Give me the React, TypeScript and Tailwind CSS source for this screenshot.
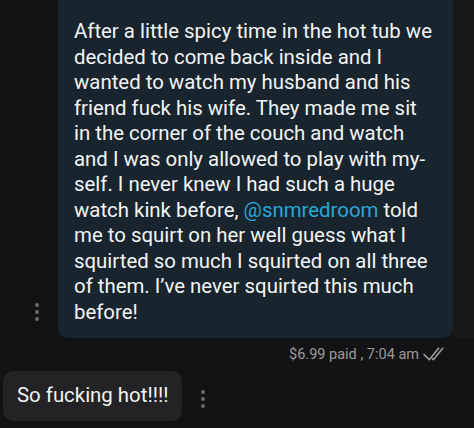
import React from 'react';

const Dots: React.FC<{ className?: string }> = ({ className }) => (
  <div className={`flex flex-col gap-[3px] ${className ?? ''}`}>
    <span className="w-[4px] h-[4px] rounded-full bg-[#6b6b6e]" />
    <span className="w-[4px] h-[4px] rounded-full bg-[#6b6b6e]" />
    <span className="w-[4px] h-[4px] rounded-full bg-[#6b6b6e]" />
  </div>
);

const DoubleCheck: React.FC = () => (
  <svg width="27" height="17" viewBox="0 0 26 16" fill="none" stroke="#9a9a9c" strokeWidth="1.6" strokeLinecap="round" strokeLinejoin="round">
    <path d="M1 8 L6 13 L15 2" />
    <path d="M9 12 L10 13 L19 2" />
  </svg>
);

// message wraps exactly as in the app
const lines: React.ReactNode[] = [
  'After a little spicy time in the hot tub we',
  'decided to come back inside and I',
  'wanted to watch my husband and his',
  'friend fuck his wife. They made me sit',
  'in the corner of the couch and watch',
  'and I was only allowed to play with my-',
  'self. I never knew I had such a huge',
  <>
    watch kink before, <span className="text-[#2aa6d6]">@snmredroom</span> told
  </>,
  'me to squirt on her well guess what I',
  'squirted so much I squirted on all three',
  'of them. I’ve never squirted this much',
  'before!',
];

export default function App() {
  return (
    <div
      className="w-[474px] h-[428px] bg-[#131315] overflow-hidden text-white"
      style={{ fontFamily: 'Roboto, "Noto Sans", sans-serif' }}
    >
      {/* Incoming paid message */}
      <div className="flex items-end">
        <div className="w-[58px] flex justify-center pb-[17px] pl-[16px]">
          <Dots />
        </div>
        <div className="w-[395px] bg-[#18252e] rounded-b-[10px] pl-[16px] pr-[8px] pt-[19px] pb-[13px] text-[20.4px] leading-[25.5px] text-[#f2f4f5] whitespace-nowrap">
          {lines.map((l, i) => (
            <div key={i}>{l}</div>
          ))}
        </div>
        <div className="flex-1 self-stretch bg-[#18181a]" />
      </div>

      {/* Meta */}
      <div className="flex justify-end items-center pr-[24px] pt-[6px] text-[14.5px] text-[#9a9a9c] gap-[4px]">
        <span>$6.99 paid , 7:04 am</span>
        <DoubleCheck />
      </div>

      {/* Outgoing reply */}
      <div className="flex items-center mt-[5px] pl-[3px]">
        <div className="bg-[#232325] rounded-[10px] px-[14px] h-[50px] flex items-center text-[20.4px] text-[#f2f2f2]">
          So fucking hot!!!!
        </div>
        <Dots className="ml-[19px] mt-[6px]" />
      </div>
    </div>
  );
}
